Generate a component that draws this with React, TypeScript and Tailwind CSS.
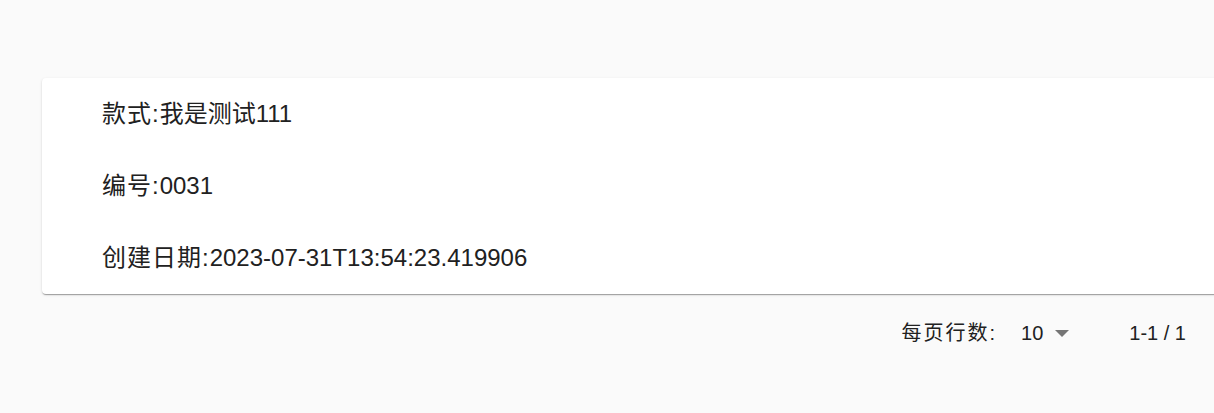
const rows = [
  { label: "款式", value: "我是测试111" },
  { label: "编号", value: "0031" },
  { label: "创建日期", value: "2023-07-31T13:54:23.419906" },
];

function ArrowDrop() {
  return (
    <svg width="14" height="7" viewBox="0 0 14 7" className="block">
      <path d="M0 0 L14 0 L7 7 Z" fill="#757575" />
    </svg>
  );
}

export default function App() {
  return (
    <div
      className="min-h-[413px] bg-[#fafafa] overflow-hidden pt-[78px] pl-[42px] text-[#212121]"
      style={{ fontFamily: '"Liberation Sans", Arial, "Noto Sans CJK SC", sans-serif' }}
    >
      {/* record card */}
      <div className="w-[1200px] bg-white rounded-[4px] shadow-[0px_2px_1px_-1px_rgba(0,0,0,0.2),0px_1px_1px_0px_rgba(0,0,0,0.14),0px_1px_3px_0px_rgba(0,0,0,0.12)]">
        {rows.map((r) => (
          <div key={r.label} className="h-[72px] flex items-center pl-[60px] text-[24px] leading-none">
            <span className="tracking-[1px]">{r.label}:</span>
            <span>{r.value}</span>
          </div>
        ))}
      </div>

      {/* pagination */}
      <div className="flex justify-end items-center h-[52px] mt-[13px] pr-[28px] text-[20px] leading-none">
        <span className="tracking-[2px]">每页行数:</span>
        <span className="ml-[24px]">10</span>
        <span className="ml-[12px]">
          <ArrowDrop />
        </span>
        <span className="ml-[60px]">1-1 / 1</span>
      </div>
    </div>
  );
}
